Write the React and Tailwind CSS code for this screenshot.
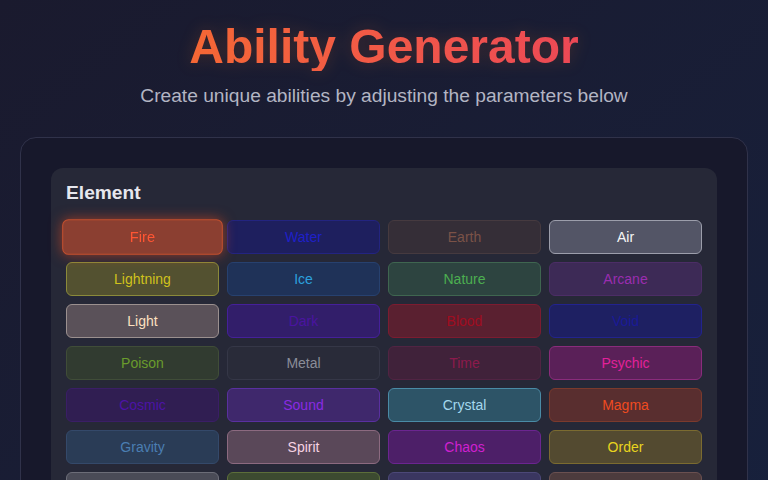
import React, { useState } from 'react';

const elements = [
    { name: 'Fire', cls: 'text-[#ff5533] bg-[#5c3030] border-[#7e3a2c]', on: 'bg-[#8b3f31] border-[#c2502f] shadow-[0_0_12px_rgba(255,80,30,0.55)]' },
    { name: 'Water', cls: 'text-[#1f1fc8] bg-[#1e1f5e] border-[#232480]' },
    { name: 'Earth', cls: 'text-[#7b5247] bg-[#352e37] border-[#463a3f]' },
    { name: 'Air', cls: 'text-[#f5f5f5] bg-[#535566] border-[#9c9eab]' },
    { name: 'Lightning', cls: 'text-[#d0c21c] bg-[#535130] border-[#8b8a3a]' },
    { name: 'Ice', cls: 'text-[#2ca0de] bg-[#1f3258] border-[#27416f]' },
    { name: 'Nature', cls: 'text-[#4cae50] bg-[#2d4440] border-[#3f6650]' },
    { name: 'Arcane', cls: 'text-[#9a2db0] bg-[#3d2a56] border-[#4c2d66]' },
    { name: 'Light', cls: 'text-[#fde0c0] bg-[#5a5159] border-[#9b908f]' },
    { name: 'Dark', cls: 'text-[#4a14a0] bg-[#321e6a] border-[#45209a]' },
    { name: 'Blood', cls: 'text-[#a10d20] bg-[#5a2030] border-[#7c1c30]' },
    { name: 'Void', cls: 'text-[#1a1a96] bg-[#1e2062] border-[#22238e]' },
    { name: 'Poison', cls: 'text-[#6a9c2c] bg-[#313b30] border-[#404d38]' },
    { name: 'Metal', cls: 'text-[#8a8d98] bg-[#292b39] border-[#353747]' },
    { name: 'Time', cls: 'text-[#8c1a4c] bg-[#40223a] border-[#512443]' },
    { name: 'Psychic', cls: 'text-[#e2209a] bg-[#5a2058] border-[#8a2c7c]' },
    { name: 'Cosmic', cls: 'text-[#4d13a6] bg-[#301e52] border-[#3a1e66]' },
    { name: 'Sound', cls: 'text-[#8a2be2] bg-[#3f286c] border-[#5a30a0]' },
    { name: 'Crystal', cls: 'text-[#a4d8ee] bg-[#2d5467] border-[#4a8ba6]' },
    { name: 'Magma', cls: 'text-[#ef4b1f] bg-[#592e2f] border-[#7c3a2c]' },
    { name: 'Gravity', cls: 'text-[#4a7eb2] bg-[#2a3c56] border-[#34496a]' },
    { name: 'Spirit', cls: 'text-[#f7d2e2] bg-[#5a4859] border-[#8c6a80]' },
    { name: 'Chaos', cls: 'text-[#d01fd0] bg-[#4d1f68] border-[#6b2590]' },
    { name: 'Order', cls: 'text-[#e8d41e] bg-[#534a30] border-[#7b6b30]' },
    { name: 'Shadow', cls: 'text-[#b8b8c4] bg-[#4a4b57] border-[#6c6d78]' },
    { name: 'Swamp', cls: 'text-[#8fae4a] bg-[#3c4a30] border-[#5c6e3a]' },
    { name: 'Dream', cls: 'text-[#9a90e0] bg-[#3a3660] border-[#4c4878]' },
    { name: 'Sand', cls: 'text-[#d8b890] bg-[#4c3b3d] border-[#6a5050]' },
];

export default function App() {
    const [element, setElement] = useState('Fire');

    return (
        <div className="min-h-screen bg-gradient-to-br from-[#1a1a2e] to-[#17213d] px-5 pt-[23px] pb-10 font-['Liberation_Sans',Arial,sans-serif]">
            <h1 className="text-center text-5xl font-bold bg-gradient-to-r from-[#f97316] to-[#e8375f] bg-clip-text text-transparent drop-shadow-[0_0_8px_rgba(249,115,22,0.2)]">
                Ability Generator
            </h1>
            <p className="mt-[11px] text-center text-[19.2px] leading-7 text-[#b3b5c3]">
                Create unique abilities by adjusting the parameters below
            </p>

            <div className="mt-[27px] rounded-2xl border border-[#30324a] bg-[#17182b] p-[30px]">
                <div className="rounded-xl bg-[#262837] p-[15px]">
                    <h2 className="mb-[17px] text-[19.2px] leading-5 font-bold text-[#e6e7ee]">Element</h2>
                    <div className="grid grid-cols-4 gap-2">
                        {elements.map((el) => {
                            const active = el.name === element;
                            return (
                                <button
                                    key={el.name}
                                    onClick={() => setElement(el.name)}
                                    className={`h-[34px] rounded-md border text-sm cursor-pointer transition-transform ${el.cls} ${active ? 'scale-105 ' + el.on : ''}`}
                                >
                                    {el.name}
                                </button>
                            );
                        })}
                    </div>
                </div>
            </div>
        </div>
    );
}
